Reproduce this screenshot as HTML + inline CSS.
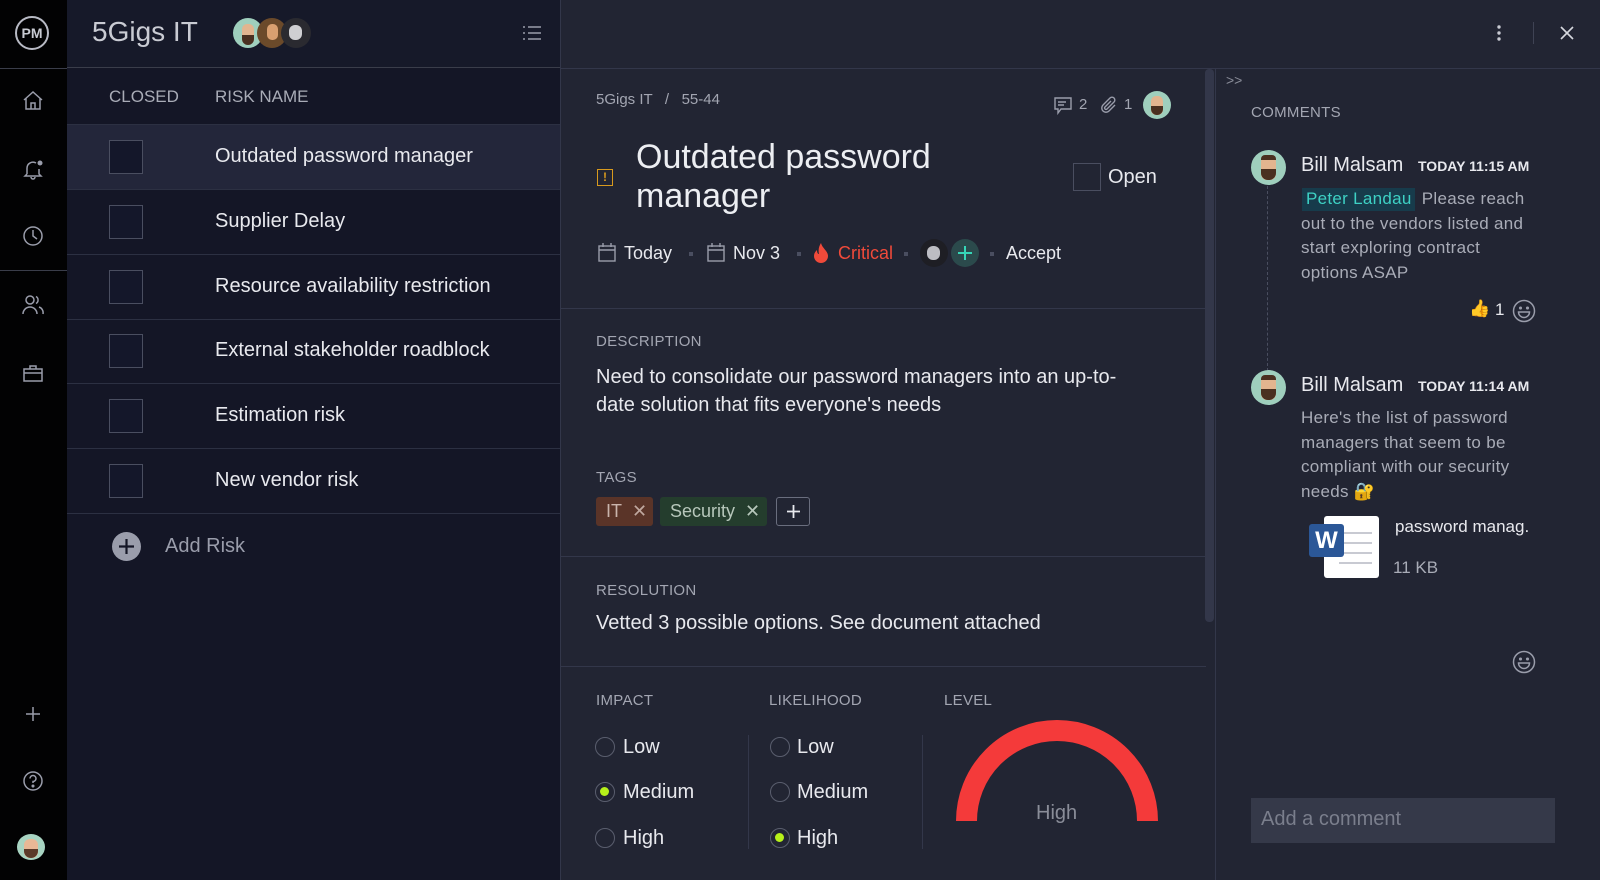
<!DOCTYPE html>
<html><head><meta charset="utf-8"><style>
*{margin:0;padding:0;box-sizing:border-box}
body{width:1600px;height:880px;overflow:hidden;background:#222533;font-family:"Liberation Sans",sans-serif;color:#e6e7ec;position:relative}
.a{position:absolute}
.lbl{font-size:15px;color:#a3a6b2;letter-spacing:.3px}
svg{position:absolute;overflow:visible}
.row{position:absolute;left:67px;width:493px;height:65px;border-bottom:1px solid #2c3042}
.cb{position:absolute;left:42px;top:15px;width:34px;height:34px;border:1.5px solid #4a4e60;background:#14172a}
.rt{position:absolute;left:148px;top:20px;font-size:20px;color:#e8e9ee}
.radio{position:absolute;width:20px;height:20px;border:1.5px solid #5a5e6e;border-radius:50%}
.radio.on::after{content:"";position:absolute;left:4px;top:4px;width:9px;height:9px;border-radius:50%;background:#b6f01a}
.rl{position:absolute;font-size:20px;color:#e8e9ee}
.av{position:absolute;border-radius:50%;background:#8fb9a8;overflow:hidden}
.ct{font-size:17px;color:#a9acb7;line-height:24.5px;letter-spacing:.3px}
</style></head><body>
<!-- sidebar -->
<div class="a" style="left:0;top:0;width:67px;height:880px;background:#020203"></div>
<div class="a" style="left:0;top:68px;width:67px;height:1px;background:#3a3d4a"></div>
<div class="a" style="left:0;top:270px;width:67px;height:1px;background:#3a3d4a"></div>
<div class="a" style="left:15px;top:16px;width:34px;height:34px;border:2px solid #b8bac4;border-radius:50%;font-size:14px;font-weight:bold;color:#c8cad2;text-align:center;line-height:30px">PM</div>
<svg style="left:22px;top:90px" width="22" height="22" fill="none" stroke="#9a9dab" stroke-width="1.5"><path d="M2 10 L11 2 L20 10 M4 8 V19 H18 V8 M9 19 V13 H13 V19"/></svg>
<svg style="left:22px;top:158px" width="22" height="22" fill="none" stroke="#9a9dab" stroke-width="1.5"><path d="M5 16 V10 A6 6 0 0 1 14 5 M17 11 V16 L19 18 H3 L5 16 M9 19 A2 2 0 0 0 13 19"/><circle cx="18" cy="5" r="2.5" fill="#9a9dab" stroke="none"/></svg>
<svg style="left:22px;top:225px" width="22" height="22" fill="none" stroke="#9a9dab" stroke-width="1.5"><circle cx="11" cy="11" r="9"/><path d="M11 5 V11 L15 14"/></svg>
<svg style="left:22px;top:294px" width="22" height="22" fill="none" stroke="#9a9dab" stroke-width="1.5"><circle cx="8" cy="6" r="4"/><path d="M1 20 A7 7 0 0 1 15 20"/><path d="M14 2.5 A4 4 0 0 1 14 9.5 M17 13 A6 6 0 0 1 21 20"/></svg>
<svg style="left:22px;top:363px" width="22" height="22" fill="none" stroke="#9a9dab" stroke-width="1.5"><rect x="2" y="6" width="18" height="12"/><path d="M8 6 V3 H14 V6 M2 10 H20"/></svg>
<svg style="left:26px;top:707px" width="14" height="14" stroke="#9a9dab" stroke-width="1.5"><path d="M7 0 V14 M0 7 H14"/></svg>
<svg style="left:22px;top:770px" width="22" height="22" fill="none" stroke="#9a9dab" stroke-width="1.5"><circle cx="11" cy="11" r="9"/><path d="M8 8.5 A3 3 0 1 1 11 11.5 V13"/><circle cx="11" cy="16" r=".8" fill="#9a9dab"/></svg>
<div class="av" style="left:17px;top:834px;width:28px;height:26px;background:#a8d4c2"><div style="position:absolute;left:7px;top:5px;width:14px;height:19px;background:#e8b896;border-radius:6px"></div><div style="position:absolute;left:7px;top:15px;width:14px;height:9px;background:#5a3a2a;border-radius:0 0 7px 7px"></div></div>

<!-- list panel -->
<div class="a" style="left:67px;top:0;width:493px;height:880px;background:#141626"></div>
<div class="a" style="left:67px;top:0;width:493px;height:68px;background:#161929;border-bottom:1px solid #3a3d4a"></div>
<div class="a" style="left:92px;top:16px;font-size:28px;color:#c9cbd3">5Gigs IT</div>
<div class="av" style="left:233px;top:18px;width:30px;height:30px;background:#9fcfbd"><div style="position:absolute;left:9px;top:6px;width:12px;height:20px;background:#e2b58f;border-radius:5px"></div><div style="position:absolute;left:9px;top:17px;width:12px;height:10px;background:#4a3020;border-radius:0 0 6px 6px"></div></div>
<div class="av" style="left:257px;top:18px;width:30px;height:30px;background:#6b4a2a"><div style="position:absolute;left:10px;top:6px;width:11px;height:16px;background:#d9a070;border-radius:5px"></div></div>
<div class="av" style="left:281px;top:18px;width:30px;height:30px;background:#2a2a30"><div style="position:absolute;left:8px;top:7px;width:13px;height:15px;background:#cfcfd2;border-radius:6px"></div></div>
<svg style="left:523px;top:25px" width="18" height="16" stroke="#9a9dab" stroke-width="1.4"><path d="M5 2 H18 M5 8 H18 M5 14 H18 M0 2 H2 M0 8 H2 M0 14 H2"/></svg>
<div class="a" style="left:109px;top:87px;font-size:17px;color:#a9acb7">CLOSED</div>
<div class="a" style="left:215px;top:87px;font-size:17px;color:#a9acb7">RISK NAME</div>
<div class="a" style="left:67px;top:124px;width:493px;height:1px;background:#2c3042"></div>
<div class="row" style="top:125px;background:#23263a"><div class="cb"></div><div class="rt">Outdated password manager</div></div>
<div class="row" style="top:190px"><div class="cb"></div><div class="rt">Supplier Delay</div></div>
<div class="row" style="top:255px"><div class="cb"></div><div class="rt">Resource availability restriction</div></div>
<div class="row" style="top:319px"><div class="cb"></div><div class="rt">External stakeholder roadblock</div></div>
<div class="row" style="top:384px"><div class="cb"></div><div class="rt">Estimation risk</div></div>
<div class="row" style="top:449px"><div class="cb"></div><div class="rt">New vendor risk</div></div>
<div class="a" style="left:112px;top:532px;width:29px;height:29px;border-radius:50%;background:#9a9dab"></div>
<svg style="left:119px;top:539px" width="15" height="15" stroke="#141626" stroke-width="2.2"><path d="M7.5 0 V15 M0 7.5 H15"/></svg>
<div class="a" style="left:165px;top:535px;font-size:20px;color:#9a9dab">Add Risk</div>

<!-- detail panel -->
<div class="a" style="left:560px;top:0;width:1px;height:880px;background:#33374a"></div>
<div class="a" style="left:561px;top:68px;width:1039px;height:1px;background:#33374a"></div>
<svg style="left:1496px;top:24px" width="6" height="18" fill="#c8cad2"><circle cx="3" cy="3" r="1.7"/><circle cx="3" cy="9" r="1.7"/><circle cx="3" cy="15" r="1.7"/></svg>
<div class="a" style="left:1533px;top:22px;width:1px;height:22px;background:#3f4354"></div>
<svg style="left:1561px;top:27px" width="12" height="12" stroke="#d6d8de" stroke-width="1.6"><path d="M0 0 L12 12 M12 0 L0 12"/></svg>

<div class="a" style="left:596px;top:91px;font-size:15px;color:#a3a6b2">5Gigs IT &nbsp;&nbsp;/&nbsp;&nbsp; 55-44</div>
<svg style="left:1054px;top:97px" width="18" height="17" fill="none" stroke="#9a9dab" stroke-width="1.4"><path d="M1 1 H17 V12 H7 L4 16 V12 H1 Z M4 5 H12 M4 8 H10"/></svg>
<div class="a" style="left:1079px;top:96px;font-size:15px;color:#a3a6b2">2</div>
<svg style="left:1100px;top:96px" width="18" height="18" fill="none" stroke="#9a9dab" stroke-width="1.4"><path d="M15 9 L9 15 A4 4 0 0 1 3 9 L10 2 A2.8 2.8 0 0 1 14 6 L7 13 A1.4 1.4 0 0 1 5 11 L11 5"/></svg>
<div class="a" style="left:1124px;top:96px;font-size:15px;color:#a3a6b2">1</div>
<div class="av" style="left:1143px;top:91px;width:28px;height:28px;background:#9fcfbd"><div style="position:absolute;left:8px;top:5px;width:12px;height:19px;background:#e2b58f;border-radius:5px"></div><div style="position:absolute;left:8px;top:15px;width:12px;height:9px;background:#4a3020;border-radius:0 0 6px 6px"></div></div>

<div class="a" style="left:597px;top:169px;width:16px;height:17px;border:1.8px solid #d89a1e;color:#d89a1e;font-size:12px;text-align:center;line-height:14px;font-weight:bold">!</div>
<div class="a" style="left:636px;top:138px;font-size:34px;line-height:39px;color:#eceef2">Outdated password<br>manager</div>
<div class="a" style="left:1073px;top:163px;width:28px;height:28px;border:1.5px solid #4a4e60"></div>
<div class="a" style="left:1108px;top:166px;font-size:20px;color:#e8e9ee">Open</div>

<svg style="left:598px;top:243px" width="18" height="19" fill="none" stroke="#9a9dab" stroke-width="1.4"><rect x="1" y="3" width="16" height="15"/><path d="M1 7 H17 M5 0 V4 M13 0 V4"/></svg>
<div class="a" style="left:624px;top:243px;font-size:18px;color:#e8e9ee">Today</div>
<div class="a" style="left:689px;top:252px;width:4px;height:4px;background:#4a4e60"></div>
<svg style="left:707px;top:243px" width="18" height="19" fill="none" stroke="#9a9dab" stroke-width="1.4"><rect x="1" y="3" width="16" height="15"/><path d="M1 7 H17 M5 0 V4 M13 0 V4"/></svg>
<div class="a" style="left:733px;top:243px;font-size:18px;color:#e8e9ee">Nov 3</div>
<div class="a" style="left:797px;top:252px;width:4px;height:4px;background:#4a4e60"></div>
<svg style="left:813px;top:243px" width="16" height="20" fill="#f04a3a"><path d="M8 0 C9 5 15 8 15 13 A7 7 0 0 1 1 13 C1 10 3 8 4 7 C4 10 5 11 6 11 C5 7 6 3 8 0 Z"/></svg>
<div class="a" style="left:838px;top:243px;font-size:18px;color:#f04a3a">Critical</div>
<div class="a" style="left:904px;top:252px;width:4px;height:4px;background:#4a4e60"></div>
<div class="av" style="left:920px;top:239px;width:28px;height:28px;background:#1e1e24"><div style="position:absolute;left:7px;top:7px;width:13px;height:14px;background:#bdbdc2;border-radius:6px"></div></div>
<div class="a" style="left:951px;top:239px;width:28px;height:28px;border-radius:50%;background:#2b4a4c"></div>
<svg style="left:958px;top:246px" width="14" height="14" stroke="#36d6b8" stroke-width="2"><path d="M7 0 V14 M0 7 H14"/></svg>
<div class="a" style="left:990px;top:252px;width:4px;height:4px;background:#4a4e60"></div>
<div class="a" style="left:1006px;top:243px;font-size:18px;color:#e8e9ee">Accept</div>

<div class="a" style="left:561px;top:308px;width:645px;height:1px;background:#33374a"></div>
<div class="a lbl" style="left:596px;top:333px">DESCRIPTION</div>
<div class="a" style="left:596px;top:363px;font-size:20px;line-height:28px;color:#e8e9ee;width:548px">Need to consolidate our password managers into an up-to-date solution that fits everyone's needs</div>
<div class="a lbl" style="left:596px;top:469px">TAGS</div>
<div class="a" style="left:596px;top:497px;width:57px;height:29px;background:#5a3428;border-radius:3px;font-size:18px;color:#c9b4ac;padding:4px 0 0 10px">IT<span style="margin-left:10px;color:#c0a89f">✕</span></div>
<div class="a" style="left:660px;top:497px;width:107px;height:29px;background:#243d2d;border-radius:3px;font-size:18px;color:#b7c7bb;padding:4px 0 0 10px">Security<span style="margin-left:10px">✕</span></div>
<div class="a" style="left:776px;top:497px;width:34px;height:29px;border:1.5px solid #6a6e7e;border-radius:3px"></div>
<svg style="left:787px;top:505px" width="13" height="13" stroke="#e8e9ee" stroke-width="1.8"><path d="M6.5 0 V13 M0 6.5 H13"/></svg>
<div class="a" style="left:561px;top:556px;width:645px;height:1px;background:#33374a"></div>
<div class="a lbl" style="left:596px;top:582px">RESOLUTION</div>
<div class="a" style="left:596px;top:612px;font-size:20px;color:#e8e9ee">Vetted 3 possible options. See document attached</div>
<div class="a" style="left:561px;top:666px;width:645px;height:1px;background:#33374a"></div>
<div class="a lbl" style="left:596px;top:692px">IMPACT</div>
<div class="a lbl" style="left:769px;top:692px">LIKELIHOOD</div>
<div class="a lbl" style="left:944px;top:692px">LEVEL</div>
<div class="radio" style="left:595px;top:737px"></div><div class="rl" style="left:623px;top:736px">Low</div>
<div class="radio on" style="left:595px;top:782px"></div><div class="rl" style="left:623px;top:781px">Medium</div>
<div class="radio" style="left:595px;top:828px"></div><div class="rl" style="left:623px;top:827px">High</div>
<div class="a" style="left:748px;top:735px;width:1px;height:114px;background:#33374a"></div>
<div class="radio" style="left:770px;top:737px"></div><div class="rl" style="left:797px;top:736px">Low</div>
<div class="radio" style="left:770px;top:782px"></div><div class="rl" style="left:797px;top:781px">Medium</div>
<div class="radio on" style="left:770px;top:828px"></div><div class="rl" style="left:797px;top:827px">High</div>
<div class="a" style="left:922px;top:735px;width:1px;height:114px;background:#33374a"></div>
<svg style="left:950px;top:715px" width="215" height="110"><path d="M16.5 106 A90.5 90.5 0 0 1 197.5 106" fill="none" stroke="#f43a3a" stroke-width="21"/></svg>
<div class="a" style="left:1036px;top:802px;font-size:20px;color:#8a8d99">High</div>

<!-- scrollbar -->
<div class="a" style="left:1205px;top:69px;width:9px;height:553px;border-radius:4px;background:#33374a"></div>
<div class="a" style="left:1215px;top:69px;width:1px;height:811px;background:#33374a"></div>

<!-- comments -->
<div class="a" style="left:1226px;top:72px;font-size:14px;color:#8a8d99">&gt;&gt;</div>
<div class="a lbl" style="left:1251px;top:104px">COMMENTS</div>
<div class="a" style="left:1267px;top:186px;width:0;height:185px;border-left:1.5px dashed #4a4e60"></div>
<div class="av" style="left:1251px;top:150px;width:35px;height:35px;background:#9fcfbd"><div style="position:absolute;left:10px;top:6px;width:15px;height:24px;background:#e2b58f;border-radius:6px"></div><div style="position:absolute;left:10px;top:19px;width:15px;height:11px;background:#4a3020;border-radius:0 0 7px 7px"></div><div style="position:absolute;left:10px;top:5px;width:15px;height:5px;background:#4a3020;border-radius:4px 4px 0 0"></div></div>
<div class="a" style="left:1301px;top:154px;font-size:20px;color:#e8e9ee">Bill Malsam</div>
<div class="a" style="left:1418px;top:158px;font-size:14px;font-weight:bold;color:#e8e9ee">TODAY 11:15 AM</div>
<div class="a" style="left:1302px;top:188px;width:113px;height:23px;background:#173b4b"></div>
<div class="a ct" style="left:1301px;top:187px;width:235px"><span style="color:#3ed1c4;padding-left:5px">Peter Landau</span>&nbsp; Please reach out to the vendors listed and start exploring contract options ASAP</div>
<div class="a" style="left:1469px;top:299px;font-size:17px">👍</div>
<div class="a" style="left:1495px;top:300px;font-size:17px;color:#e8e9ee">1</div>
<svg style="left:1512px;top:299px" width="24" height="24" fill="none" stroke="#9a9dab" stroke-width="1.5"><circle cx="12" cy="12" r="10.5"/><path d="M6.5 13 H17.5 A5.5 5.5 0 0 1 6.5 13 Z"/><circle cx="8.5" cy="9" r=".8" fill="#9a9dab"/><circle cx="15.5" cy="9" r=".8" fill="#9a9dab"/></svg>
<div class="av" style="left:1251px;top:370px;width:35px;height:35px;background:#9fcfbd"><div style="position:absolute;left:10px;top:6px;width:15px;height:24px;background:#e2b58f;border-radius:6px"></div><div style="position:absolute;left:10px;top:19px;width:15px;height:11px;background:#4a3020;border-radius:0 0 7px 7px"></div><div style="position:absolute;left:10px;top:5px;width:15px;height:5px;background:#4a3020;border-radius:4px 4px 0 0"></div></div>
<div class="a" style="left:1301px;top:374px;font-size:20px;color:#e8e9ee">Bill Malsam</div>
<div class="a" style="left:1418px;top:378px;font-size:14px;font-weight:bold;color:#e8e9ee">TODAY 11:14 AM</div>
<div class="a ct" style="left:1301px;top:406px;width:240px">Here's the list of password managers that seem to be compliant with our security needs 🔐</div>
<div class="a" style="left:1324px;top:516px;width:55px;height:62px;background:#fff;border-radius:3px"></div>
<div class="a" style="left:1339px;top:532px;width:33px;height:2px;background:#c8cad2;box-shadow:0 10px 0 #c8cad2,0 20px 0 #c8cad2,0 30px 0 #c8cad2"></div>
<div class="a" style="left:1309px;top:524px;width:35px;height:33px;background:#2b5797;border-radius:3px;color:#fff;font-weight:bold;font-size:24px;text-align:center;line-height:33px">W</div>
<div class="a" style="left:1395px;top:517px;font-size:17px;color:#e8e9ee">password manag.</div>
<div class="a" style="left:1393px;top:558px;font-size:17px;color:#a9acb7">11 KB</div>
<svg style="left:1512px;top:650px" width="24" height="24" fill="none" stroke="#9a9dab" stroke-width="1.5"><circle cx="12" cy="12" r="10.5"/><path d="M6.5 13 H17.5 A5.5 5.5 0 0 1 6.5 13 Z"/><circle cx="8.5" cy="9" r=".8" fill="#9a9dab"/><circle cx="15.5" cy="9" r=".8" fill="#9a9dab"/></svg>
<div class="a" style="left:1251px;top:798px;width:304px;height:45px;background:#353949;font-size:20px;color:#7a7e8c;padding:10px 0 0 10px">Add a comment</div>
</body></html>
